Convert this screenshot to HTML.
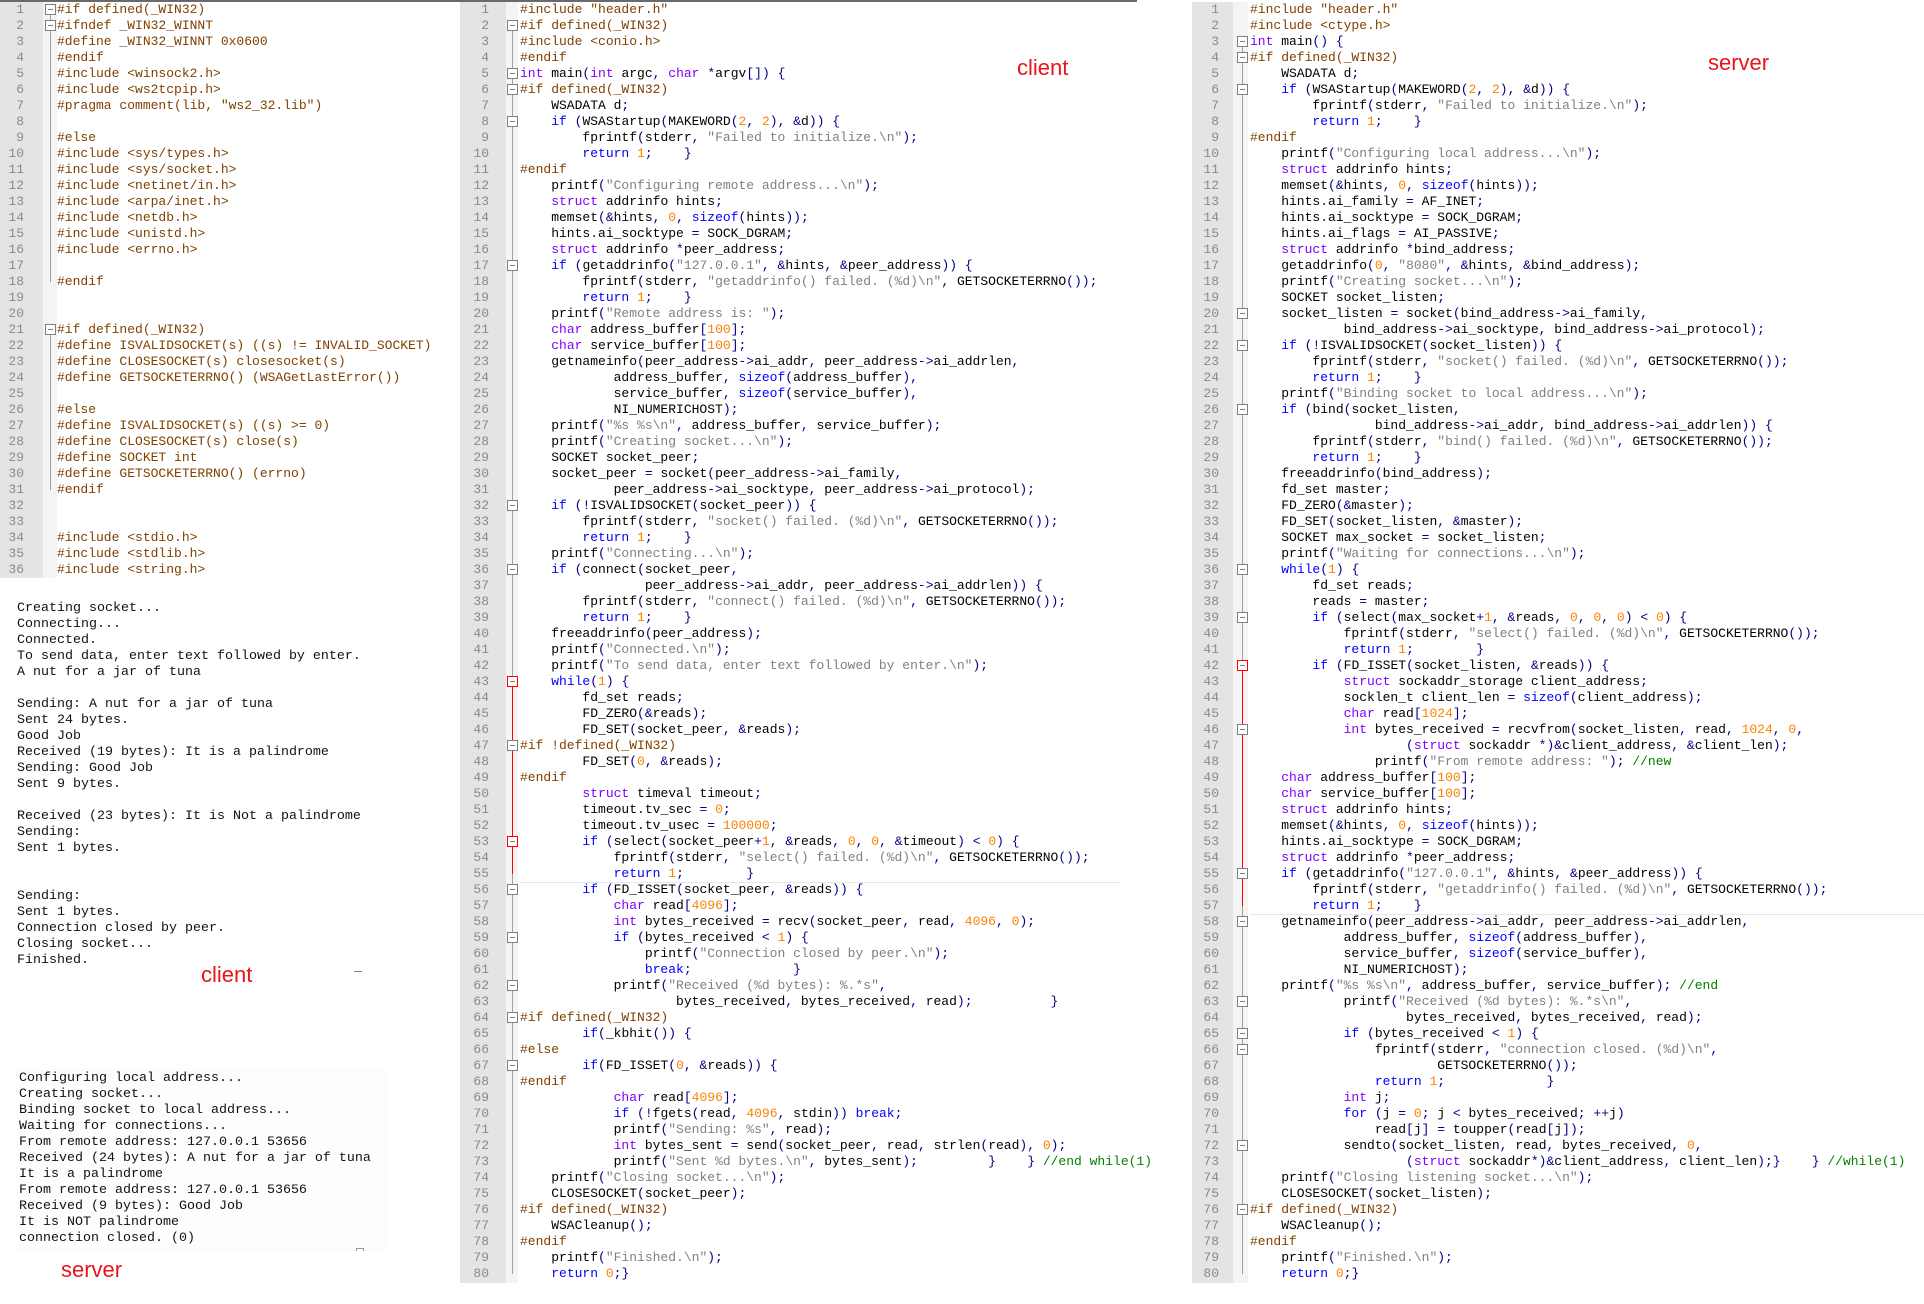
<!DOCTYPE html>
<html><head><meta charset="utf-8">
<style>
*{margin:0;padding:0;box-sizing:border-box}
html,body{width:1924px;height:1304px;background:#fff;overflow:hidden;position:relative}
pre{position:absolute;font-family:"Liberation Mono",monospace;font-size:13px;line-height:16px;white-space:pre;color:#000}
.gut{position:absolute;background:#e4e4e4}
.fold{position:absolute;background:#f4f4f4}
.num{color:#8a8a8a;text-align:right}
.pp{color:#804000}.kw{color:#0000ff}.ty{color:#8000ff}.nu{color:#ff8000}.st{color:#808080}.cm{color:#008000}.op{color:#000080}
.con{position:absolute;font-family:"Liberation Mono",monospace;font-size:13.33px;line-height:16px;color:#111;white-space:pre}
.red{position:absolute;color:#e8141b;font-family:"Liberation Sans",Arial,sans-serif;font-size:22px}
.bx{position:absolute;width:11px;height:11px;border:1px solid #808080;background:#fff}
.bx::after{content:"";position:absolute;left:2px;top:4px;width:5px;height:1px;background:#808080}
.bx.r{border-color:#f00}
.vl{position:absolute;width:1px;background:#a0a0a0}
.sep{position:absolute;height:1px;background:#e6e6e6}
</style></head><body>
<div style="position:absolute;left:0;top:0;width:1137px;height:2px;background:#6a6a6a"></div>

<!-- left panel -->
<div class="gut" style="left:0;top:2px;width:43px;height:576px"></div>
<div class="fold" style="left:43px;top:2px;width:14px;height:576px"></div>
<pre class="num" style="left:0;top:2px;width:24px">1
2
3
4
5
6
7
8
9
10
11
12
13
14
15
16
17
18
19
20
21
22
23
24
25
26
27
28
29
30
31
32
33
34
35
36</pre>
<pre class="code" style="left:57px;top:2px">#if defined(_WIN32)
#ifndef _WIN32_WINNT
#define _WIN32_WINNT 0x0600
#endif
#include &lt;winsock2.h&gt;
#include &lt;ws2tcpip.h&gt;
#pragma comment(lib, "ws2_32.lib")

#else
#include &lt;sys/types.h&gt;
#include &lt;sys/socket.h&gt;
#include &lt;netinet/in.h&gt;
#include &lt;arpa/inet.h&gt;
#include &lt;netdb.h&gt;
#include &lt;unistd.h&gt;
#include &lt;errno.h&gt;

#endif


#if defined(_WIN32)
#define ISVALIDSOCKET(s) ((s) != INVALID_SOCKET)
#define CLOSESOCKET(s) closesocket(s)
#define GETSOCKETERRNO() (WSAGetLastError())

#else
#define ISVALIDSOCKET(s) ((s) &gt;= 0)
#define CLOSESOCKET(s) close(s)
#define SOCKET int
#define GETSOCKETERRNO() (errno)
#endif


#include &lt;stdio.h&gt;
#include &lt;stdlib.h&gt;
#include &lt;string.h&gt;</pre>

<div class="con" style="left:17px;top:601px">Creating socket...
Connecting...
Connected.
To send data, enter text followed by enter.
A nut for a jar of tuna

Sending: A nut for a jar of tuna
Sent 24 bytes.
Good Job
Received (19 bytes): It is a palindrome
Sending: Good Job
Sent 9 bytes.

Received (23 bytes): It is Not a palindrome
Sending:
Sent 1 bytes.


Sending:
Sent 1 bytes.
Connection closed by peer.
Closing socket...
Finished.</div>
<div style="position:absolute;left:354px;top:971px;width:8px;height:1px;background:#888"></div>
<div class="red" style="left:201px;top:962px">client</div>

<div style="position:absolute;left:16px;top:1069px;width:372px;height:182px;background:#fdfdfd"></div>
<div class="con" style="left:19px;top:1071px">Configuring local address...
Creating socket...
Binding socket to local address...
Waiting for connections...
From remote address: 127.0.0.1 53656
Received (24 bytes): A nut for a jar of tuna
It is a palindrome
From remote address: 127.0.0.1 53656
Received (9 bytes): Good Job
It is NOT palindrome
connection closed. (0)</div>
<div style="position:absolute;left:356px;top:1248px;width:8px;height:3px;border:1px solid #999;border-bottom:none"></div>
<div class="red" style="left:61px;top:1257px">server</div>

<!-- middle panel -->
<div class="gut" style="left:460px;top:2px;width:46px;height:1281px"></div>
<div class="fold" style="left:506px;top:2px;width:12px;height:1281px"></div>
<pre class="num" style="left:460px;top:2px;width:29px">1
2
3
4
5
6
7
8
9
10
11
12
13
14
15
16
17
18
19
20
21
22
23
24
25
26
27
28
29
30
31
32
33
34
35
36
37
38
39
40
41
42
43
44
45
46
47
48
49
50
51
52
53
54
55
56
57
58
59
60
61
62
63
64
65
66
67
68
69
70
71
72
73
74
75
76
77
78
79
80</pre>
<div class="sep" style="left:520px;top:882px;width:600px"></div>
<pre class="code" style="left:520px;top:2px">#include "header.h"
#if defined(_WIN32)
#include &lt;conio.h&gt;
#endif
int main(int argc, char *argv[]) {
#if defined(_WIN32)
    WSADATA d;
    if (WSAStartup(MAKEWORD(2, 2), &amp;d)) {
        fprintf(stderr, "Failed to initialize.\n");
        return 1;    }
#endif
    printf("Configuring remote address...\n");
    struct addrinfo hints;
    memset(&amp;hints, 0, sizeof(hints));
    hints.ai_socktype = SOCK_DGRAM;
    struct addrinfo *peer_address;
    if (getaddrinfo("127.0.0.1", &amp;hints, &amp;peer_address)) {
        fprintf(stderr, "getaddrinfo() failed. (%d)\n", GETSOCKETERRNO());
        return 1;    }
    printf("Remote address is: ");
    char address_buffer[100];
    char service_buffer[100];
    getnameinfo(peer_address-&gt;ai_addr, peer_address-&gt;ai_addrlen,
            address_buffer, sizeof(address_buffer),
            service_buffer, sizeof(service_buffer),
            NI_NUMERICHOST);
    printf("%s %s\n", address_buffer, service_buffer);
    printf("Creating socket...\n");
    SOCKET socket_peer;
    socket_peer = socket(peer_address-&gt;ai_family,
            peer_address-&gt;ai_socktype, peer_address-&gt;ai_protocol);
    if (!ISVALIDSOCKET(socket_peer)) {
        fprintf(stderr, "socket() failed. (%d)\n", GETSOCKETERRNO());
        return 1;    }
    printf("Connecting...\n");
    if (connect(socket_peer,
                peer_address-&gt;ai_addr, peer_address-&gt;ai_addrlen)) {
        fprintf(stderr, "connect() failed. (%d)\n", GETSOCKETERRNO());
        return 1;    }
    freeaddrinfo(peer_address);
    printf("Connected.\n");
    printf("To send data, enter text followed by enter.\n");
    while(1) {
        fd_set reads;
        FD_ZERO(&amp;reads);
        FD_SET(socket_peer, &amp;reads);
#if !defined(_WIN32)
        FD_SET(0, &amp;reads);
#endif
        struct timeval timeout;
        timeout.tv_sec = 0;
        timeout.tv_usec = 100000;
        if (select(socket_peer+1, &amp;reads, 0, 0, &amp;timeout) &lt; 0) {
            fprintf(stderr, "select() failed. (%d)\n", GETSOCKETERRNO());
            return 1;        }
        if (FD_ISSET(socket_peer, &amp;reads)) {
            char read[4096];
            int bytes_received = recv(socket_peer, read, 4096, 0);
            if (bytes_received &lt; 1) {
                printf("Connection closed by peer.\n");
                break;             }
            printf("Received (%d bytes): %.*s",
                    bytes_received, bytes_received, read);          }
#if defined(_WIN32)
        if(_kbhit()) {
#else
        if(FD_ISSET(0, &amp;reads)) {
#endif
            char read[4096];
            if (!fgets(read, 4096, stdin)) break;
            printf("Sending: %s", read);
            int bytes_sent = send(socket_peer, read, strlen(read), 0);
            printf("Sent %d bytes.\n", bytes_sent);         }    } //end while(1)
    printf("Closing socket...\n");
    CLOSESOCKET(socket_peer);
#if defined(_WIN32)
    WSACleanup();
#endif
    printf("Finished.\n");
    return 0;}</pre>
<div class="red" style="left:1017px;top:55px">client</div>

<!-- right panel -->
<div class="gut" style="left:1192px;top:2px;width:41px;height:1281px"></div>
<div class="fold" style="left:1233px;top:2px;width:15px;height:1281px"></div>
<pre class="num" style="left:1192px;top:2px;width:27px">1
2
3
4
5
6
7
8
9
10
11
12
13
14
15
16
17
18
19
20
21
22
23
24
25
26
27
28
29
30
31
32
33
34
35
36
37
38
39
40
41
42
43
44
45
46
47
48
49
50
51
52
53
54
55
56
57
58
59
60
61
62
63
64
65
66
67
68
69
70
71
72
73
74
75
76
77
78
79
80</pre>
<div class="sep" style="left:1250px;top:914px;width:674px"></div>
<pre class="code" style="left:1250px;top:2px">#include "header.h"
#include &lt;ctype.h&gt;
int main() {
#if defined(_WIN32)
    WSADATA d;
    if (WSAStartup(MAKEWORD(2, 2), &amp;d)) {
        fprintf(stderr, "Failed to initialize.\n");
        return 1;    }
#endif
    printf("Configuring local address...\n");
    struct addrinfo hints;
    memset(&amp;hints, 0, sizeof(hints));
    hints.ai_family = AF_INET;
    hints.ai_socktype = SOCK_DGRAM;
    hints.ai_flags = AI_PASSIVE;
    struct addrinfo *bind_address;
    getaddrinfo(0, "8080", &amp;hints, &amp;bind_address);
    printf("Creating socket...\n");
    SOCKET socket_listen;
    socket_listen = socket(bind_address-&gt;ai_family,
            bind_address-&gt;ai_socktype, bind_address-&gt;ai_protocol);
    if (!ISVALIDSOCKET(socket_listen)) {
        fprintf(stderr, "socket() failed. (%d)\n", GETSOCKETERRNO());
        return 1;    }
    printf("Binding socket to local address...\n");
    if (bind(socket_listen,
                bind_address-&gt;ai_addr, bind_address-&gt;ai_addrlen)) {
        fprintf(stderr, "bind() failed. (%d)\n", GETSOCKETERRNO());
        return 1;    }
    freeaddrinfo(bind_address);
    fd_set master;
    FD_ZERO(&amp;master);
    FD_SET(socket_listen, &amp;master);
    SOCKET max_socket = socket_listen;
    printf("Waiting for connections...\n");
    while(1) {
        fd_set reads;
        reads = master;
        if (select(max_socket+1, &amp;reads, 0, 0, 0) &lt; 0) {
            fprintf(stderr, "select() failed. (%d)\n", GETSOCKETERRNO());
            return 1;        }
        if (FD_ISSET(socket_listen, &amp;reads)) {
            struct sockaddr_storage client_address;
            socklen_t client_len = sizeof(client_address);
            char read[1024];
            int bytes_received = recvfrom(socket_listen, read, 1024, 0,
                    (struct sockaddr *)&amp;client_address, &amp;client_len);
                printf("From remote address: "); //new
    char address_buffer[100];
    char service_buffer[100];
    struct addrinfo hints;
    memset(&amp;hints, 0, sizeof(hints));
    hints.ai_socktype = SOCK_DGRAM;
    struct addrinfo *peer_address;
    if (getaddrinfo("127.0.0.1", &amp;hints, &amp;peer_address)) {
        fprintf(stderr, "getaddrinfo() failed. (%d)\n", GETSOCKETERRNO());
        return 1;    }
    getnameinfo(peer_address-&gt;ai_addr, peer_address-&gt;ai_addrlen,
            address_buffer, sizeof(address_buffer),
            service_buffer, sizeof(service_buffer),
            NI_NUMERICHOST);
    printf("%s %s\n", address_buffer, service_buffer); //end
            printf("Received (%d bytes): %.*s\n",
                    bytes_received, bytes_received, read);
            if (bytes_received &lt; 1) {
                fprintf(stderr, "connection closed. (%d)\n",
                        GETSOCKETERRNO());
                return 1;             }
            int j;
            for (j = 0; j &lt; bytes_received; ++j)
                read[j] = toupper(read[j]);
            sendto(socket_listen, read, bytes_received, 0,
                    (struct sockaddr*)&amp;client_address, client_len);}    } //while(1)
    printf("Closing listening socket...\n");
    CLOSESOCKET(socket_listen);
#if defined(_WIN32)
    WSACleanup();
#endif
    printf("Finished.\n");
    return 0;}</pre>
<div class="red" style="left:1708px;top:50px">server</div>

<script>
(function(){
var KW={"if":"kw","return":"kw","while":"kw","break":"kw","sizeof":"kw","for":"kw","int":"ty","char":"ty","struct":"ty"};
function esc(s){return s.replace(/&/g,"&amp;").replace(/</g,"&lt;").replace(/>/g,"&gt;");}
function hl(line){
  if(/^\s*#/.test(line)) return '<span class="pp">'+esc(line)+'</span>';
  var out="",re=/("(?:[^"\\]|\\.)*")|(\/\/.*$)|(\b\d+\b)|([A-Za-z_]\w*)|([(){}\[\];,&*!<>=+\-.%]+)|(\s+)|(.)/g,m;
  while((m=re.exec(line))){
    if(m[1])out+='<span class="st">'+esc(m[1])+'</span>';
    else if(m[2])out+='<span class="cm">'+esc(m[2])+'</span>';
    else if(m[3])out+='<span class="nu">'+m[3]+'</span>';
    else if(m[4])out+=KW[m[4]]?'<span class="'+KW[m[4]]+'">'+m[4]+'</span>':m[4];
    else if(m[5])out+='<span class="op">'+esc(m[5])+'</span>';
    else out+=esc(m[0]);
  }
  return out;
}
var ps=document.querySelectorAll("pre.code");
for(var i=0;i<ps.length;i++){var t=ps[i].textContent.split("\n");ps[i].innerHTML=t.map(hl).join("\n");}
function y(n){return 2+(n-1)*16;}
function vl(x,a,b,c){var d=document.createElement("div");d.className="vl";d.style.left=x+"px";d.style.top=(y(a)+8)+"px";d.style.height=(y(b)-y(a))+"px";if(c)d.style.background=c;document.body.appendChild(d);}
function bx(x,n,r){var d=document.createElement("div");d.className="bx"+(r?" r":"");d.style.left=(x-5)+"px";d.style.top=(y(n)+2)+"px";document.body.appendChild(d);}
vl(50,1,18);vl(50,21,31);[1,2,21].forEach(function(n){bx(50,n)});
vl(512,2,80);vl(512,43,55,"#f00");
[2,5,6,8,17,32,36,47,56,59,62,64,67].forEach(function(n){bx(512,n)});[43,53].forEach(function(n){bx(512,n,1)});
vl(1242,3,80);vl(1242,42,57,"#f00");
[3,4,6,20,22,26,36,39,46,55,58,63,65,66,72,76].forEach(function(n){bx(1242,n)});bx(1242,42,1);
})();
</script>
</body></html>
